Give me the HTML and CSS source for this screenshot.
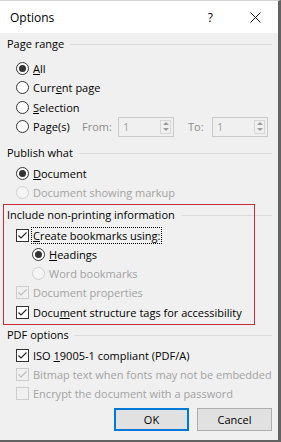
FILE: index.html
```
<!DOCTYPE html>
<html>
<head>
<meta charset="utf-8">
<link rel="stylesheet" href="styles.css">
</head>
<body>
<div class="window">
  <header class="titlebar">
    <span class="title">Options</span>
    <span class="help">?</span>
    <span class="close"><svg width="11" height="11" viewBox="0 0 11 11"><path d="M0.5 0.5 L10.5 10.5 M10.5 0.5 L0.5 10.5" stroke="#111" stroke-width="1" fill="none"/></svg></span>
  </header>
  <main class="content">
    <section class="group g-range">
      <div class="group-head"><span>Page range</span></div>
      <div class="opt"><span class="radio on"></span><span><u>A</u>ll</span></div>
      <div class="opt"><span class="radio"></span><span>Curr<u>e</u>nt page</span></div>
      <div class="opt"><span class="radio"></span><span><u>S</u>election</span></div>
      <div class="opt opt-pages">
        <span class="radio"></span><span class="pages-label">Pa<u>g</u>e(s)</span>
        <span class="field-label from">From:</span>
        <span class="spin"><span class="spin-val">1</span><span class="spin-btns"><i class="up"></i><i class="down"></i></span></span>
        <span class="field-label to">To:</span>
        <span class="spin"><span class="spin-val">1</span><span class="spin-btns"><i class="up"></i><i class="down"></i></span></span>
      </div>
    </section>

    <section class="group g-publish">
      <div class="group-head"><span>Publish what</span></div>
      <div class="opt"><span class="radio on"></span><span><u>D</u>ocument</span></div>
      <div class="opt disabled"><span class="radio"></span><span>Document showing markup</span></div>
    </section>

    <section class="group g-include">
      <div class="group-head"><span>Include non-printing information</span></div>
      <div class="opt"><span class="check on"><svg width="11" height="11" viewBox="0 0 11 11"><path d="M1.5 5.5 L4 8 L9.5 2.5" fill="none" stroke-width="1.1"/></svg></span><span class="focus"><u>C</u>reate bookmarks using:</span></div>
      <div class="opt nested"><span class="radio on"></span><span><u>H</u>eadings</span></div>
      <div class="opt nested disabled"><span class="radio"></span><span>Word bookmarks</span></div>
      <div class="opt disabled"><span class="check on"><svg width="11" height="11" viewBox="0 0 11 11"><path d="M1.5 5.5 L4 8 L9.5 2.5" fill="none" stroke-width="1.1"/></svg></span><span>Document properties</span></div>
      <div class="opt"><span class="check on"><svg width="11" height="11" viewBox="0 0 11 11"><path d="M1.5 5.5 L4 8 L9.5 2.5" fill="none" stroke-width="1.1"/></svg></span><span>Docu<u>m</u>ent structure tags for accessibility</span></div>
    </section>

    <section class="group g-pdf">
      <div class="group-head"><span>PDF options</span></div>
      <div class="opt"><span class="check on"><svg width="11" height="11" viewBox="0 0 11 11"><path d="M1.5 5.5 L4 8 L9.5 2.5" fill="none" stroke-width="1.1"/></svg></span><span>ISO <u>1</u>9005-1 compliant (PDF/A)</span></div>
      <div class="opt disabled"><span class="check on"><svg width="11" height="11" viewBox="0 0 11 11"><path d="M1.5 5.5 L4 8 L9.5 2.5" fill="none" stroke-width="1.1"/></svg></span><span>Bitmap text when fonts may not be embedded</span></div>
      <div class="opt disabled"><span class="check"></span><span>Encrypt the document with a password</span></div>
    </section>

    <div class="buttons">
      <button class="btn default">OK</button>
      <button class="btn">Cancel</button>
    </div>
  </main>
</div>
</body>
</html>
```
FILE: styles.css
```
html, body {
  margin: 0;
  padding: 0;
  background: #f0f0f0;
}

.window {
  width: 281px;
  height: 442px;
  box-sizing: border-box;
  background: #f0f0f0;
  border-top: 1px solid #d4d4d4;
  border-right: 3px solid #626262;
  border-bottom: 2px solid #626262;
  display: flex;
  flex-direction: column;
  font-family: "Open Sans", "Noto Sans", sans-serif;
  font-size: 11px;
  color: #000;
  overflow: hidden;
}

.titlebar {
  height: 32px;
  flex: none;
  background: #fff;
  display: flex;
  align-items: center;
  padding-left: 10px;
}

.title {
  flex: 1;
  font-size: 12px;
}

.help {
  font-size: 12px;
  margin-right: 37px;
}

.close {
  display: flex;
  margin-right: 17px;
}

.content {
  padding: 3px 6px 0 7px;
  display: flex;
  flex-direction: column;
}

.group {
  display: flex;
  flex-direction: column;
}

.group-head {
  display: flex;
  align-items: center;
  height: 16px;
  line-height: 16px;
  margin-bottom: 2.5px;
  white-space: nowrap;
}

.group-head::after {
  content: "";
  flex: 1;
  border-top: 1px solid #dcdcdc;
  margin-left: 6px;
  margin-top: 1px;
}

.g-range .group-head {
  margin-bottom: 7px;
}

.g-publish {
  margin-top: 8.25px;
}

.g-include {
  margin-top: 2px;
  padding-top: 3px;
  padding-bottom: 3.25px;
  position: relative;
}

.g-include::before {
  content: "";
  position: absolute;
  top: 0;
  bottom: 0;
  left: -4px;
  right: 17px;
  border: 1px solid #c82a3e;
  pointer-events: none;
}

.g-pdf {
  margin-top: 2px;
}

.opt {
  display: flex;
  align-items: center;
  height: 19.25px;
  padding-left: 9px;
  gap: 4px;
  white-space: nowrap;
}

.opt.nested {
  padding-left: 25px;
}

.opt.disabled {
  color: #a2a2a2;
}

.opt u {
  text-decoration: underline;
  text-underline-offset: 1px;
}

.radio {
  width: 13px;
  height: 13px;
  box-sizing: border-box;
  border: 1px solid #333;
  border-radius: 50%;
  background: #fff;
  flex: none;
  display: flex;
  align-items: center;
  justify-content: center;
}

.radio.on::after {
  content: "";
  width: 7px;
  height: 7px;
  border-radius: 50%;
  background: #333;
}

.disabled .radio {
  border-color: #cfcfcf;
  background: #f5f5f5;
}

.check {
  width: 13px;
  height: 13px;
  box-sizing: border-box;
  border: 1px solid #333;
  background: #fff;
  flex: none;
  display: flex;
}

.check svg {
  stroke: #222;
}

.disabled .check {
  border-color: #cccccc;
  background: #f0f0f0;
}

.disabled .check svg {
  stroke: #bdbdbd;
}

.focus {
  outline: 1px dotted #000;
  outline-offset: 0;
  padding: 0 1px;
  margin-left: -1px;
  line-height: 15px;
}

.opt-pages {
  height: 20px;
}

.pages-label {
  width: 45px;
}

.field-label {
  color: #8c8c8c;
}

.from {
  width: 32px;
}

.to {
  width: 20px;
  margin-left: 10px;
}

.spin {
  width: 56px;
  height: 20px;
  box-sizing: border-box;
  border: 1px solid #cacaca;
  background: #f0f0f0;
  display: flex;
  align-items: center;
  justify-content: space-between;
  padding: 1px 2px 1px 4px;
}

.spin-val {
  color: #a0a0a0;
}

.spin-btns {
  width: 11px;
  height: 14px;
  box-sizing: border-box;
  border: 1px solid #d6d6d6;
  display: flex;
  flex-direction: column;
  align-items: center;
  justify-content: space-around;
}

.spin-btns i {
  width: 0;
  height: 0;
  border-left: 3px solid transparent;
  border-right: 3px solid transparent;
}

.spin-btns .up {
  border-bottom: 3px solid #9a9a9a;
}

.spin-btns .down {
  border-top: 3px solid #9a9a9a;
}

.buttons {
  display: flex;
  justify-content: flex-end;
  gap: 8px;
  margin-top: 4.75px;
}

.btn {
  width: 75px;
  height: 23px;
  box-sizing: border-box;
  border: 1px solid #adadad;
  background: #e1e1e1;
  font-family: "Open Sans", "Noto Sans", sans-serif;
  font-size: 11px;
  color: #000;
  padding: 0;
  margin: 0;
}

.btn.default {
  border: 2px solid #0078d7;
}
```
